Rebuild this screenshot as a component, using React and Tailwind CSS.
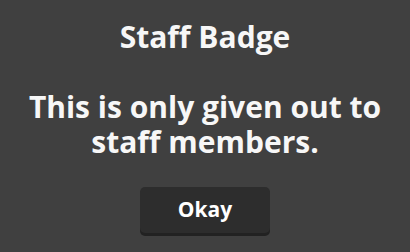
export default function App() {
  return (
    <div className="w-[410px] h-[252px] bg-[#404040] flex flex-col items-center pt-[19px] text-[#f7f7f7]" style={{ fontFamily: '"Open Sans", "Noto Sans", sans-serif' }}>
      <div className="text-[30px] leading-[36px] font-bold">Staff Badge</div>
      <div className="mt-[34px] text-[30px] leading-[35px] font-bold text-center">
        <div>This is only given out to</div>
        <div>staff members.</div>
      </div>
      <button className="mt-[28px] w-[130px] h-[46px] rounded-[5px] bg-[#2d2d2d] shadow-[0_3px_0_#222222] text-[21px] font-bold text-white flex items-center justify-center">
        Okay
      </button>
    </div>
  );
}
